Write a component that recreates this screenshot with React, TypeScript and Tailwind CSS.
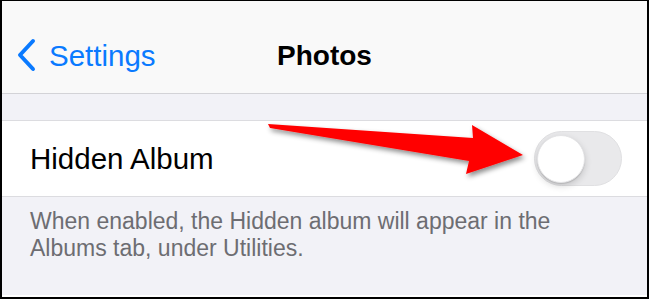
import React, { useState } from "react";

const font = { fontFamily: '"Liberation Sans", Arial, sans-serif' };

const Toggle: React.FC<{ on: boolean; onChange: (v: boolean) => void }> = ({ on, onChange }) => (
  <button
    onClick={() => onChange(!on)}
    className={`relative w-[88px] h-[55px] rounded-full border border-[#e0e0e2] ${
      on ? "bg-[#34c759]" : "bg-[#e9e9eb]"
    }`}
  >
    <span
      className={`absolute top-[2.5px] w-[48px] h-[48px] rounded-full bg-white border border-[#e4e4e6] shadow-[0_3px_7px_rgba(0,0,0,0.16),0_1px_1px_rgba(0,0,0,0.12)] ${
        on ? "left-[35px]" : "left-[2px]"
      }`}
    />
  </button>
);

const App: React.FC = () => {
  const [hidden, setHidden] = useState(false);

  return (
    <div
      className="relative w-[649px] h-[299px] overflow-hidden bg-black border-l-2 border-r-2 border-t border-b-2 border-black flex flex-col"
      style={font}
    >
      {/* nav bar */}
      <div className="h-[92px] shrink-0 bg-[#f9f9f9] grid grid-cols-[1fr_auto_1fr] items-center pt-[16px] px-[14px]">
        <div className="flex items-center text-[#0a7aff]">
          <svg width="20" height="34" viewBox="0 0 20 34" fill="none">
            <path
              d="M17 3 L4 17 L17 31"
              stroke="#0a7aff"
              strokeWidth="4"
              strokeLinecap="round"
              strokeLinejoin="round"
            />
          </svg>
          <span className="ml-[13px] text-[29.5px] leading-[29px]">Settings</span>
        </div>
        <h1 className="text-[28px] leading-[29px] font-bold text-black">Photos</h1>
        <div />
      </div>
      <div className="h-px shrink-0 bg-[#d3d3d7]" />

      <div className="h-[26px] shrink-0 bg-[#f2f2f7]" />
      <div className="h-px shrink-0 bg-[#dcdce0]" />

      {/* setting row */}
      <div className="h-[75px] shrink-0 bg-white flex items-center justify-between pl-[28px] pr-[25px]">
        <span className="text-[29.5px] text-black leading-[30px]">Hidden Album</span>
        <Toggle on={hidden} onChange={setHidden} />
      </div>
      <div className="h-px shrink-0 bg-[#dcdce0]" />

      {/* footer */}
      <div className="flex-1 bg-[#f2f2f7] pt-[11px] pl-[28px] border-b-2 border-white">
        <p className="max-w-[575px] text-[23px] leading-[27px] text-[#6d6d72]">
          When enabled, the Hidden album will appear in the Albums tab, under Utilities.
        </p>
      </div>

      {/* annotation arrow */}
      <svg
        className="absolute left-[-2px] top-[-1px] pointer-events-none"
        width="649"
        height="299"
        viewBox="0 0 649 299"
      >
        <defs>
          <filter id="sh" x="-10%" y="-30%" width="130%" height="180%">
            <feDropShadow dx="2" dy="3" stdDeviation="2.5" floodColor="#000" floodOpacity="0.45" />
          </filter>
        </defs>
        <polygon
          points="268,124 473,138 472,125 523,155 466,174 469,161 270,128"
          fill="#ff0000"
          filter="url(#sh)"
        />
      </svg>
    </div>
  );
};

export default App;
